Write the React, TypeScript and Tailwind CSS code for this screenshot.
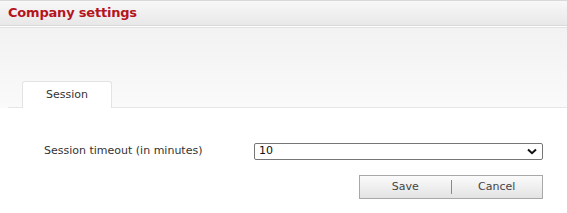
import React from "react";

export default function App() {
  return (
    <div
      className="w-[567px] h-[213px] bg-white overflow-hidden text-[#333]"
      style={{ fontFamily: '"DejaVu Sans", Verdana, sans-serif' }}
    >
      <div className="h-[26px] border-t border-[#d9d9d9] bg-gradient-to-b from-[#f8f8f8] to-[#e8e8e8] border-b border-[#d6d6d6] flex items-center pl-2">
        <span className="text-[13px] font-bold text-[#b5141c] tracking-[-0.2px]">Company settings</span>
      </div>
      <div className="h-px bg-white" />
      <div className="h-px bg-[#e2e2e5]" />
      <div className="bg-gradient-to-b from-[#f2f2f3] to-[#fafafa] h-[80px] flex items-end pl-2">
        <div className="flex-1 border-b border-[#e6e6e6] pl-[14px] flex">
          <div className="w-[90px] h-[27px] -mb-px bg-white border border-b-0 border-[#e3e3e3] rounded-t-[3px] flex items-center justify-center text-[11px] text-[#333]">
            Session
          </div>
        </div>
      </div>
      <div className="ml-2 pt-[35px] pr-[24px]">
        <div className="flex items-center">
          <div className="w-[246px] pl-[36px] text-[11px] text-[#333]">Session timeout (in minutes)</div>
          <div className="w-[289px] h-[17px] border border-[#767676] rounded-[2px] flex items-center justify-between pl-[4px] pr-[5px] text-[11px] text-[#111]">
            <span>10</span>
            <svg width="10" height="7" viewBox="0 0 10 7">
              <path d="M1 1.5 L5 5.2 L9 1.5" fill="none" stroke="#111" strokeWidth="2" />
            </svg>
          </div>
        </div>
        <div className="flex justify-end mt-[15px]">
          <div className="w-[184px] h-[24px] border border-[#a8a8a8] bg-gradient-to-b from-[#fbfbfb] to-[#e3e3e3] flex items-center text-[11px] text-[#444]">
            <div className="flex-1 text-center">Save</div>
            <div className="w-px h-[14px] bg-[#8a8a8a]" />
            <div className="flex-1 text-center">Cancel</div>
          </div>
        </div>
      </div>
    </div>
  );
}
